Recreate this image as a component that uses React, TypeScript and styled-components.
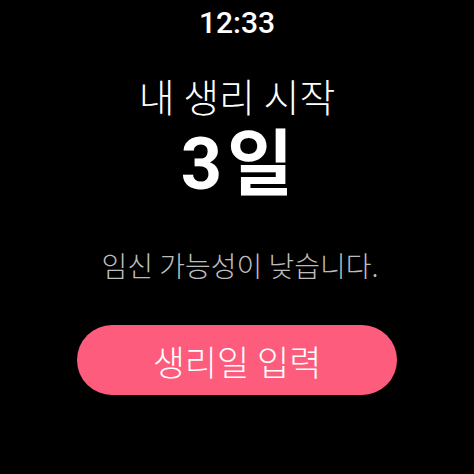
import styled, { createGlobalStyle } from "styled-components";

const GlobalStyle = createGlobalStyle`
  html, body {
    margin: 0;
    padding: 0;
    background: #000;
  }
  body {
    font-family: Roboto, "Noto Sans CJK KR", sans-serif;
  }
`;

const Screen = styled.div`
  width: 474px;
  height: 474px;
  background: #000;
  display: flex;
  flex-direction: column;
  align-items: center;
  padding-top: 6px;
  box-sizing: border-box;
  overflow: hidden;
`;

const Clock = styled.div`
  font-family: Roboto, sans-serif;
  font-size: 30px;
  font-weight: 500;
  line-height: 34px;
  color: #fff;
`;

const Title = styled.div`
  margin-top: 35px;
  font-family: "Noto Sans CJK KR", sans-serif;
  font-size: 39px;
  font-weight: 300;
  line-height: 40px;
  color: #fff;
`;

const Days = styled.div`
  margin-top: 10px;
  font-family: Roboto, "Noto Sans CJK KR", sans-serif;
  font-size: 72px;
  font-weight: 700;
  line-height: 80px;
  color: #fff;
`;

const Unit = styled.span`
  margin-left: 5px;
`;

const Note = styled.div`
  margin-top: 42px;
  padding-left: 6px;
  font-family: "Noto Sans CJK KR", sans-serif;
  font-size: 28px;
  font-weight: 300;
  line-height: 36px;
  color: #bdbdbd;
`;

const PillButton = styled.button`
  margin-top: 42px;
  width: 320px;
  height: 70px;
  border: none;
  border-radius: 35px;
  background: #fd5c7d;
  color: #fff;
  font-family: "Noto Sans CJK KR", sans-serif;
  font-size: 35px;
  font-weight: 300;
  display: flex;
  align-items: center;
  justify-content: center;
  padding: 0;
  cursor: pointer;
`;

export default function App() {
  return (
    <>
      <GlobalStyle />
      <Screen>
        <Clock>12:33</Clock>
        <Title>내 생리 시작</Title>
        <Days>
          3<Unit>일</Unit>
        </Days>
        <Note>임신 가능성이 낮습니다.</Note>
        <PillButton>생리일 입력</PillButton>
      </Screen>
    </>
  );
}
